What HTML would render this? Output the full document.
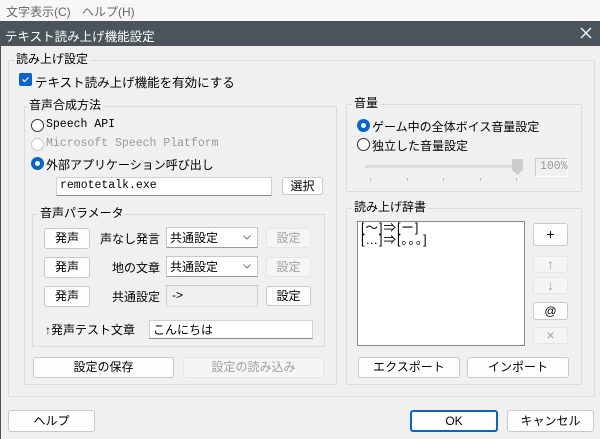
<!DOCTYPE html>
<html><head><meta charset="utf-8"><style>
*{box-sizing:border-box;margin:0;padding:0}
body{width:600px;height:439px;overflow:hidden;background:#f0f0f0;position:relative;font-family:"Liberation Sans","Noto Sans CJK JP",sans-serif;font-size:12px;color:#000}
.a{position:absolute;white-space:nowrap}
.g{position:absolute;border:1px solid #dcdcdc}
.gl{position:absolute;background:#f0f0f0;padding:0 2px;line-height:14px}
.b{position:absolute;background:#fdfdfd;border:1px solid #c9c9c9;border-radius:3px;text-align:center;font-size:12px}
.d{background:#f5f5f5;border-color:#e6e6e6;color:#a0a0a0}
.r{position:absolute;width:13px;height:13px;border-radius:50%;border:1px solid #333;background:#fff}
.rs{border:4px solid #0a64c8}
.t{position:absolute;background:#fff;border:1px solid #d0d0d0;border-bottom-color:#888}
.m{font-family:"Liberation Mono","Noto Sans CJK JP",monospace;font-size:11.5px}
</style></head><body>
<div class="a" style="left:0;top:0;width:600px;height:21px;background:#f7f7f7"></div>
<div class="a" style="left:6px;top:3px;color:#666">文字表示(C)</div>
<div class="a" style="left:82px;top:3px;color:#666">ヘルプ(H)</div>
<div class="a" style="left:0;top:21px;width:600px;height:25px;background:#4a545a"></div>
<div class="a" style="left:5px;top:26px;color:#fff;font-size:12.5px">テキスト読み上げ機能設定</div>
<svg class="a" style="left:580px;top:27px" width="12" height="12"><path d="M1 1L11 11M11 1L1 11" stroke="#fff" stroke-width="1.3"/></svg>
<div class="a" style="left:0;top:46px;width:1px;height:393px;background:#4a545a"></div>

<div class="g" style="left:8px;top:60px;width:587px;height:337px"></div>
<div class="gl" style="left:14px;top:52px">読み上げ設定</div>
<div class="a" style="left:19px;top:73px;width:13px;height:13px;background:#0a64c8;border-radius:2px"></div>
<svg class="a" style="left:19px;top:73px" width="13" height="13"><path d="M3.5 6.5L5.5 8.5L9.5 4.5" stroke="#fff" fill="none" stroke-width="1.2"/></svg>
<div class="a" style="left:35px;top:72px;font-size:12.5px">テキスト読み上げ機能を有効にする</div>

<div class="g" style="left:24px;top:106px;width:313px;height:279px"></div>
<div class="gl" style="left:27px;top:98px">音声合成方法</div>
<div class="r" style="left:31px;top:119px"></div><div class="a m" style="left:46px;top:118px">Speech API</div>
<div class="r" style="left:31px;top:138px;border-color:#c8c8c8"></div><div class="a m" style="left:46px;top:137px;color:#999">Microsoft Speech Platform</div>
<div class="r rs" style="left:31px;top:157px"></div><div class="a" style="left:46px;top:156px">外部アプリケーション呼び出し</div>
<div class="t" style="left:56px;top:177px;width:216px;height:19px"></div><div class="a m" style="left:60px;top:179px">remotetalk.exe</div>
<div class="b" style="left:282px;top:177px;width:41px;height:18px;line-height:16px">選択</div>

<div class="g" style="left:32px;top:214px;width:293px;height:133px"></div>
<div class="gl" style="left:38px;top:206px">音声パラメータ</div>
<div class="b" style="left:44px;top:228px;width:46px;height:21px;line-height:19px">発声</div>
<div class="b" style="left:44px;top:257px;width:46px;height:21px;line-height:19px">発声</div>
<div class="b" style="left:44px;top:286px;width:46px;height:21px;line-height:19px">発声</div>
<div class="a" style="left:100px;top:230px">声なし発言</div>
<div class="a" style="left:112px;top:259px">地の文章</div>
<div class="a" style="left:112px;top:288px">共通設定</div>
<div class="t" style="left:166px;top:227px;width:92px;height:21px;border-color:#c8c8c8;border-bottom-color:#999"></div><div class="a" style="left:170px;top:229px">共通設定</div><svg class="a" style="left:243px;top:235px" width="8" height="5"><path d="M0.5 0.5L4 4L7.5 0.5" stroke="#777" fill="none"/></svg>
<div class="t" style="left:166px;top:256px;width:92px;height:21px;border-color:#c8c8c8;border-bottom-color:#999"></div><div class="a" style="left:170px;top:258px">共通設定</div><svg class="a" style="left:243px;top:264px" width="8" height="5"><path d="M0.5 0.5L4 4L7.5 0.5" stroke="#777" fill="none"/></svg>
<div class="a" style="left:166px;top:285px;width:92px;height:22px;background:#f0f0f0;border:1px solid #ccc;border-bottom-color:#e0e0e0"></div><div class="a" style="left:172px;top:288px">-&gt;</div>
<div class="b d" style="left:266px;top:228px;width:45px;height:20px;line-height:18px">設定</div>
<div class="b d" style="left:266px;top:257px;width:45px;height:20px;line-height:18px">設定</div>
<div class="b" style="left:266px;top:286px;width:45px;height:20px;line-height:18px">設定</div>
<div class="a" style="left:45px;top:321px">↑発声テスト文章</div>
<div class="t" style="left:149px;top:320px;width:164px;height:19px"></div><div class="a" style="left:153px;top:321px">こんにちは</div>
<div class="b" style="left:33px;top:357px;width:141px;height:21px;line-height:19px">設定の保存</div>
<div class="b d" style="left:183px;top:357px;width:141px;height:21px;line-height:19px">設定の読み込み</div>

<div class="g" style="left:346px;top:104px;width:236px;height:88px"></div>
<div class="gl" style="left:352px;top:96px">音量</div>
<div class="r rs" style="left:357px;top:119px"></div><div class="a" style="left:372px;top:118px">ゲーム中の全体ボイス音量設定</div>
<div class="r" style="left:357px;top:138px"></div><div class="a" style="left:372px;top:137px">独立した音量設定</div>
<div class="a" style="left:365px;top:165px;width:155px;height:3px;background:#dedede"></div>
<svg class="a" style="left:512px;top:159px" width="11" height="16"><path d="M0 0H11V11L5.5 16L0 11Z" fill="#cdcdcd"/></svg>
<div class="a" style="left:370px;top:178px;width:1px;height:3px;background:#bbb"></div>
<div class="a" style="left:407px;top:178px;width:1px;height:3px;background:#bbb"></div>
<div class="a" style="left:443px;top:178px;width:1px;height:3px;background:#bbb"></div>
<div class="a" style="left:480px;top:178px;width:1px;height:3px;background:#bbb"></div>
<div class="a" style="left:516px;top:178px;width:1px;height:3px;background:#bbb"></div>
<div class="a" style="left:535px;top:158px;width:33px;height:19px;border:1px solid #ccc;border-right-color:#fff;border-bottom-color:#fff"></div><div class="a m" style="left:540px;top:160px;color:#999">100%</div>

<div class="g" style="left:346px;top:208px;width:236px;height:177px"></div>
<div class="gl" style="left:352px;top:200px">読み上げ辞書</div>
<div class="a" style="left:357px;top:221px;width:168px;height:125px;background:#fff;border:1px solid #828790"></div>
<div class="a" style="left:361px;top:222px;line-height:12px;font-size:12.5px;letter-spacing:1px">[～]⇒[ー]<br>[…]⇒[。。。]</div>
<div class="b" style="left:533px;top:223px;width:35px;height:23px;line-height:21px;font-size:14px">+</div>
<div class="b d" style="left:533px;top:256px;width:35px;height:17px;line-height:15px;font-size:14px">↑</div>
<div class="b d" style="left:533px;top:277px;width:35px;height:17px;line-height:15px;font-size:14px">↓</div>
<div class="b" style="left:533px;top:302px;width:35px;height:18px;line-height:16px">@</div>
<div class="b d" style="left:533px;top:327px;width:35px;height:17px;line-height:15px;font-size:14px">×</div>
<div class="b" style="left:358px;top:357px;width:102px;height:21px;line-height:19px">エクスポート</div>
<div class="b" style="left:467px;top:357px;width:102px;height:21px;line-height:19px">インポート</div>

<div class="b" style="left:8px;top:410px;width:87px;height:22px;line-height:20px">ヘルプ</div>
<div class="b" style="left:410px;top:410px;width:88px;height:22px;line-height:18px;border:2px solid #0a64c8">OK</div>
<div class="b" style="left:507px;top:410px;width:87px;height:22px;line-height:20px">キャンセル</div>
</body></html>
